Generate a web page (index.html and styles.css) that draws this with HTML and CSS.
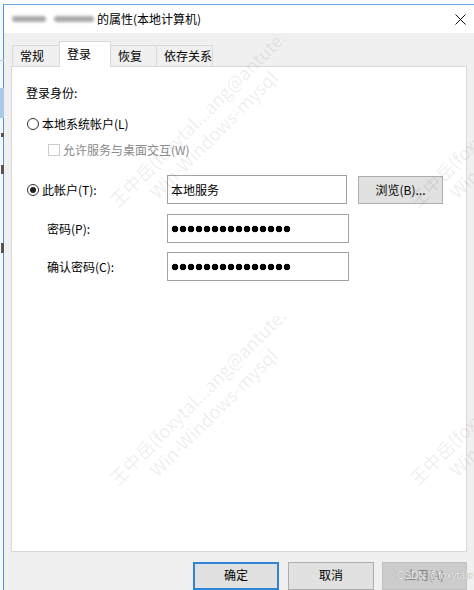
FILE: index.html
```html
<!doctype html>
<html lang="zh-CN">
  <head>
    <meta charset="UTF-8" />
    <meta name="viewport" content="width=device-width, initial-scale=1.0" />
    <title>服务属性</title>
    <link rel="stylesheet" href="styles.css">
  </head>
  <body>
    <div class="screen">
      <div class="behind">
        <span class="behind-line"></span>
        <span class="behind-sel"></span>
        <span class="behind-mark m1"></span>
        <span class="behind-mark m2"></span>
        <span class="behind-mark m3"></span>
      </div>

      <div class="dialog">
        <div class="titlebar">
          <span class="blur blur-a"></span>
          <span class="blur blur-b"></span>
          <span class="title">的属性(本地计算机)</span>
          <svg class="close" width="11" height="11" viewBox="0 0 11 11">
            <path d="M0.5 0.5 L10.5 10.5 M10.5 0.5 L0.5 10.5" stroke="#111" stroke-width="1" fill="none" />
          </svg>
        </div>

        <div class="client">
          <div class="tabs">
            <div class="tab t1">常规</div>
            <div class="tab t2 active">登录</div>
            <div class="tab t3">恢复</div>
            <div class="tab t4">依存关系</div>
          </div>

          <div class="panel">
            <div class="heading">登录身份:</div>

            <div class="option">
              <span class="radio"></span>本地系统帐户(L)
            </div>

            <div class="option sub disabled">
              <span class="check"></span>允许服务与桌面交互(W)
            </div>

            <div class="field-row first">
              <div class="field-label">
                <span class="radio checked"></span>此帐户(T):
              </div>
              <div class="input account">本地服务</div>
              <div class="btn browse">浏览(B)...</div>
            </div>

            <div class="field-row">
              <div class="field-label indent">密码(P):</div>
              <div class="input"><span class="dots"></span></div>
            </div>

            <div class="field-row last">
              <div class="field-label indent">确认密码(C):</div>
              <div class="input"><span class="dots"></span></div>
            </div>
          </div>

          <div class="actions">
            <div class="btn default">确定</div>
            <div class="btn">取消</div>
            <div class="btn disabled apply">应用(A)<span class="csdn">CSDN @foxytale</span></div>
          </div>
        </div>
      </div>

      <div class="watermarks">
        <div class="mark w1">王中岳(foxytal...ang@antute.<br>Win-Windows-mysql</div>
        <div class="mark w2">王中岳(foxytal...ang@antute.<br>Win-Windows-mysql</div>
        <div class="mark w3">王中岳(foxytal...ang@antute.<br>Win-Windows-mysql</div>
        <div class="mark w4">王中岳(foxytal...ang@antute.<br>Win-Windows-mysql</div>
      </div>
    </div>
  </body>
</html>
```

FILE: styles.css
```css
* {
  box-sizing: border-box;
  margin: 0;
  padding: 0;
}
body {
  font-family: "Noto Sans CJK SC", "Noto Sans", sans-serif;
  font-size: 12px;
  color: #000;
  background: #fff;
}
.screen {
  position: relative;
  width: 474px;
  height: 590px;
  overflow: hidden;
  display: flex;
  background: #fff;
}

/* strip of the window behind */
.behind {
  position: relative;
  width: 4px;
  margin-top: 5px;
  background: #f7f7f7;
}
.behind-line {
  position: absolute;
  left: 0;
  top: 55px;
  width: 4px;
  height: 1px;
  background: #c8c8c8;
}
.behind-sel {
  position: absolute;
  left: 0;
  top: 83px;
  width: 4px;
  height: 30px;
  background: #a9c9e8;
}
.behind-mark {
  position: absolute;
  left: 1px;
  width: 3px;
  background: #555;
}
.m1 { top: 128px; height: 4px; }
.m2 { top: 160px; height: 9px; }
.m3 { top: 238px; height: 10px; }

.dialog {
  flex: 1;
  margin-top: 4px;
  border-top: 1px solid #6fa7de;
  border-left: 1px solid #4d94db;
  background: #f0f0f0;
  display: flex;
  flex-direction: column;
}
.titlebar {
  height: 30px;
  background: #fff;
  display: flex;
  align-items: center;
}
.blur {
  display: inline-block;
  height: 6px;
  background: #a8a8a8;
  border-radius: 3px;
  filter: blur(1.5px);
}
.blur-a {
  width: 34px;
  margin-left: 8px;
}
.blur-b {
  width: 40px;
  margin-left: 8px;
}
.title {
  margin-left: 3px;
  line-height: 16px;
}
.close {
  margin-left: auto;
  margin-right: 8px;
}

.client {
  flex: 1;
  padding: 8px 7px 0 7px;
}
.tabs {
  position: relative;
  z-index: 1;
  display: flex;
  align-items: flex-end;
  height: 26px;
  margin-bottom: -1px;
  padding-left: 1px;
}
.tab {
  height: 21px;
  margin-bottom: 1px;
  padding-left: 7px;
  line-height: 19px;
  border: 1px solid #d9d9d9;
  border-bottom: none;
  background: #f0f0f0;
  white-space: nowrap;
}
.tab + .tab {
  margin-left: -1px;
}
.t1 { width: 48px; }
.t2 { width: 52px; }
.t3 { width: 47px; }
.t4 { width: 57px; }
.tab.active {
  position: relative;
  z-index: 2;
  height: 26px;
  margin-bottom: 0;
  line-height: 24px;
  background: #fff;
}

.panel {
  height: 486px;
  border: 1px solid #d9d9d9;
  background: #fff;
}
.heading {
  margin: 18px 0 0 14px;
  line-height: 16px;
}
.option {
  display: flex;
  align-items: center;
  margin: 15px 0 0 15px;
  line-height: 16px;
  height: 16px;
}
.option.sub {
  margin: 10px 0 0 36px;
}
.disabled {
  color: #8a8a8a;
}
.radio {
  width: 12px;
  height: 12px;
  margin-right: 3px;
  border: 1px solid #333;
  border-radius: 50%;
  background: #fff;
  flex: none;
  display: flex;
  align-items: center;
  justify-content: center;
}
.radio.checked::after {
  content: "";
  width: 6px;
  height: 6px;
  border-radius: 50%;
  background: #222;
}
.check {
  width: 12px;
  height: 12px;
  margin-right: 3px;
  border: 1px solid #cccccc;
  background: #fff;
  flex: none;
}

.field-row {
  display: flex;
  align-items: center;
  margin-top: 10px;
}
.field-row.first {
  margin-top: 17px;
}
.field-row.last {
  margin-top: 9px;
}
.field-label {
  width: 155px;
  padding-left: 15px;
  display: flex;
  align-items: center;
  line-height: 16px;
}
.field-label.indent {
  padding-left: 35px;
}
.input {
  width: 182px;
  height: 29px;
  padding-left: 3px;
  border: 1px solid #a3a3a3;
  background: #fff;
  display: flex;
  align-items: center;
  line-height: 16px;
}
.input.account {
  width: 180px;
}
.dots {
  width: 120px;
  height: 8px;
  background: radial-gradient(circle, #000 3px, transparent 3.6px) 0 0 / 8px 8px repeat-x;
}

.btn {
  width: 86px;
  height: 28px;
  border: 1px solid #adadad;
  background: #e1e1e1;
  display: flex;
  align-items: center;
  justify-content: center;
  line-height: 16px;
  white-space: nowrap;
}
.browse {
  margin-left: 11px;
  width: 85px;
}

.actions {
  display: flex;
  margin: 10px 0 0 182px;
}
.actions .btn {
  padding-bottom: 2px;
}
.actions .btn + .btn {
  margin-left: 9px;
}
.actions .btn.default {
  border: 2px solid #2f84d6;
}
.actions .btn.apply {
  position: relative;
  margin-left: 8px;
  width: 85px;
  background: #cccccc;
  border-color: #bfbfbf;
  color: #7f7f7f;
}
.csdn {
  position: absolute;
  left: 14px;
  top: 7px;
  font-family: "Liberation Sans", sans-serif;
  font-size: 10px;
  line-height: 12px;
  color: #f4f4f4;
  text-shadow: 0 0 1px #777;
}

/* diagonal watermark text over the dialog */
.watermarks {
  position: absolute;
  inset: 0;
  pointer-events: none;
  z-index: 5;
}
.mark {
  position: absolute;
  transform: translate(-50%, -50%) rotate(-45deg);
  text-align: center;
  white-space: nowrap;
  font-size: 18px;
  line-height: 22px;
  color: rgba(0, 0, 0, 0.085);
}
.w1 { left: 205px; top: 126px; }
.w2 { left: 205px; top: 404px; }
.w3 { left: 505px; top: 126px; }
.w4 { left: 505px; top: 404px; }
```
